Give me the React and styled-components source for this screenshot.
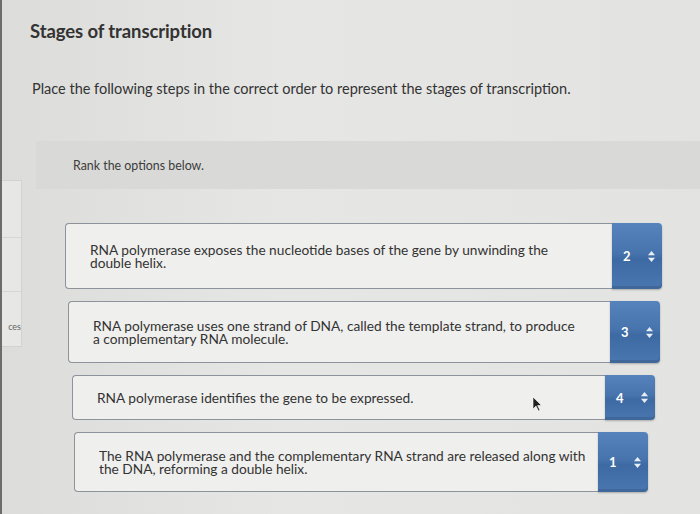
import React from 'react';
import styled, { createGlobalStyle } from 'styled-components';

const GlobalStyle = createGlobalStyle`
  html, body {
    margin: 0;
    padding: 0;
    background: #e2e2e0;
  }
  body {
    font-family: Lato, "Open Sans", "Liberation Sans", sans-serif;
    color: #3a3a3a;
  }
`;

const Page = styled.div`
  width: 700px;
  height: 514px;
  display: flex;
  overflow: hidden;
  position: relative;
  background: linear-gradient(90deg, #dcdcda 0%, #e6e6e4 40%, #e3e3e1 100%);
  border-left: 2px solid #6c6c6c;
  box-sizing: border-box;
`;

const Sidebar = styled.aside`
  width: 20px;
  flex-shrink: 0;
  padding-top: 180px;
`;

const SideBox = styled.div`
  border: 1px solid #d2d2d0;
  border-left: none;
  background: #e7e7e5;
  display: flex;
  flex-direction: column;
`;

const SideCell = styled.div`
  height: ${(p) => p.h}px;
  border-top: ${(p) => (p.first ? 'none' : '1px solid #d6d6d4')};
  font-size: 9px;
  color: #666;
  display: flex;
  align-items: flex-end;
  padding-bottom: 14px;
  box-sizing: border-box;
  overflow: hidden;
  white-space: nowrap;
  justify-content: flex-end;
`;

const Main = styled.main`
  flex: 1;
  padding: 20px 0 0 8px;
`;

const Title = styled.h1`
  margin: 0;
  font-size: 18.5px;
  font-weight: 700;
  color: #333;
  letter-spacing: -0.1px;
`;

const Prompt = styled.p`
  margin: 38px 0 0 2px;
  font-size: 14.5px;
  color: #333;
`;

const RankBand = styled.div`
  margin: 44px 0 0 6px;
  height: 48px;
  background: #d9d9d7;
  display: flex;
  align-items: center;
  padding-left: 37px;
  font-size: 12.4px;
  color: #3c3c3c;
`;

const List = styled.div`
  margin: 34px 0 0 0;
  display: flex;
  flex-direction: column;
  gap: 12px;
`;

const Row = styled.div`
  display: flex;
  height: ${(p) => p.h}px;
  margin-left: ${(p) => p.left}px;
  width: ${(p) => p.w}px;
`;

const Card = styled.div`
  flex: 1;
  background: #efefed;
  border: 1.5px solid #8e939b;
  border-right: none;
  border-radius: 4px 0 0 4px;
  display: flex;
  align-items: center;
  padding: 0 ${(p) => p.pr}px 0 24px;
  font-size: 13.7px;
  line-height: 13px;
  color: #333;
`;

const Select = styled.div`
  width: 50px;
  flex-shrink: 0;
  border-radius: 0 4px 4px 0;
  background: linear-gradient(180deg, #5783bc 0%, #4874ad 45%, #3e6aa3 55%, #4a77b0 100%);
  box-shadow: inset 0 -3px 0 rgba(0, 0, 0, 0.12), 0 1px 2px rgba(0, 0, 0, 0.25);
  display: flex;
  align-items: center;
  justify-content: space-between;
  padding: 0 7px 0 11px;
  box-sizing: border-box;
  color: #fff;
  font-weight: 700;
  font-size: 13px;
`;

const Arrows = styled.svg`
  width: 7px;
  height: 11px;
`;

const Cursor = styled.svg`
  position: absolute;
  left: 530px;
  top: 396px;
  width: 10px;
  height: 16px;
`;

// the photo is taken at an angle: rows drift right and get narrower going down
const steps = [
  {
    text: 'RNA polymerase exposes the nucleotide bases of the gene by unwinding the double helix.',
    rank: 2,
    h: 66,
    left: 35,
    w: 597,
    pr: 48,
  },
  {
    text: 'RNA polymerase uses one strand of DNA, called the template strand, to produce a complementary RNA molecule.',
    rank: 3,
    h: 62,
    left: 38,
    w: 592,
    pr: 30,
  },
  {
    text: 'RNA polymerase identifies the gene to be expressed.',
    rank: 4,
    h: 45,
    left: 42,
    w: 583,
    pr: 30,
  },
  {
    text: 'The RNA polymerase and the complementary RNA strand are released along with the DNA, reforming a double helix.',
    rank: 1,
    h: 60,
    left: 44,
    w: 574,
    pr: 6,
  },
];

function UpDown() {
  return (
    <Arrows viewBox="0 0 7 11">
      <path d="M3.5 0 L7 4.2 H0 Z" fill="#e8eef6" />
      <path d="M3.5 11 L7 6.8 H0 Z" fill="#e8eef6" />
    </Arrows>
  );
}

export default function App() {
  return (
    <>
      <GlobalStyle />
      <Page>
        <Sidebar>
          <SideBox>
            <SideCell h={56} first />
            <SideCell h={54} />
            <SideCell h={55}>ces</SideCell>
          </SideBox>
        </Sidebar>
        <Main>
          <Title>Stages of transcription</Title>
          <Prompt>
            Place the following steps in the correct order to represent the stages of
            transcription.
          </Prompt>
          <RankBand>Rank the options below.</RankBand>
          <List>
            {steps.map((s) => (
              <Row key={s.rank} h={s.h} left={s.left} w={s.w}>
                <Card pr={s.pr}>{s.text}</Card>
                <Select>
                  <span>{s.rank}</span>
                  <UpDown />
                </Select>
              </Row>
            ))}
          </List>
        </Main>
        <Cursor viewBox="0 0 10 16">
          <path d="M1 1 L1 13 L4 10 L6.5 15 L8 14.3 L5.6 9.5 L9.5 9.5 Z" fill="#222" stroke="#fff" strokeWidth="0.6" />
        </Cursor>
      </Page>
    </>
  );
}
